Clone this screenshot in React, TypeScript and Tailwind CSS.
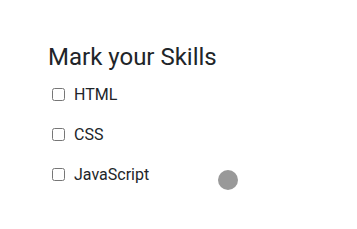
export default function App() {
  const skills = ["HTML", "CSS", "JavaScript"];
  return (
    <div
      className="relative h-[229px] w-[357px] bg-white pl-12 pt-[43px] text-[#212529]"
      style={{ fontFamily: "Roboto, 'Liberation Sans', sans-serif" }}
    >
      <h4 className="text-[24px] leading-[1.2]">Mark your Skills</h4>
      <div className="mt-[3px] flex flex-col">
        {skills.map((s) => (
          <label key={s} className="flex h-10 items-center text-base">
            <input type="checkbox" className="ml-1 mr-[9px] h-[13px] w-[13px]" />
            {s}
          </label>
        ))}
      </div>
      <div className="absolute left-[218px] top-[170px] h-5 w-5 rounded-full bg-[#999999]" />
    </div>
  );
}
